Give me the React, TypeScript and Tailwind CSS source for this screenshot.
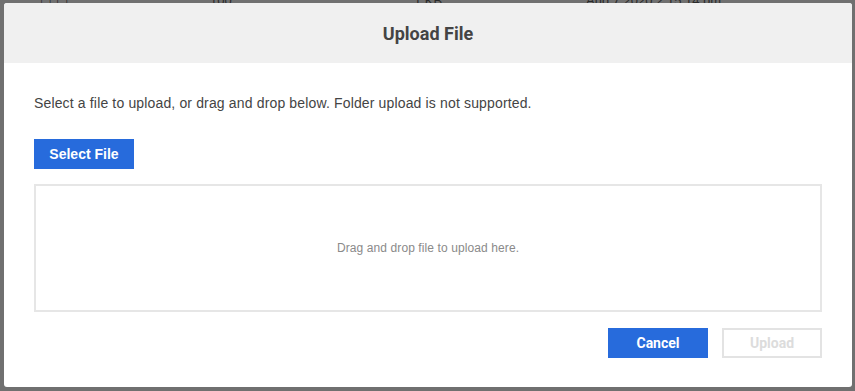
export default function App() {
  return (
    <div className="relative h-[391px] w-[855px] overflow-hidden bg-[#707070] font-['Liberation_Sans',sans-serif]">
      {/* table row behind the overlay */}
      <div className="-mt-[9px] flex h-[20px] items-center text-[13px] text-[#2a2a2a]">
        <span className="ml-[40px] w-[170px]">☐ ▭</span>
        <span className="w-[204px]">100</span>
        <span className="w-[172px]">1 KB</span>
        <span>Aug 7 2020 2:15:14 pm</span>
      </div>

      {/* modal */}
      <div className="absolute left-[4px] top-[3px] flex h-[384px] w-[848px] flex-col overflow-hidden rounded-[3px] bg-white">
        <div className="flex h-[60px] shrink-0 items-center justify-center bg-[#f0f0f0]">
          <h1 className="font-['Roboto',sans-serif] text-[18px] font-bold text-[#444]">Upload File</h1>
        </div>

        <div className="flex flex-1 flex-col px-[30px]">
          <p className="mt-[32px] text-[14px] leading-[16px] tracking-[0.15px] text-[#444]">
            Select a file to upload, or drag and drop below. Folder upload is not supported.
          </p>

          <button className="mt-[28px] h-[30px] w-[100px] bg-[#276bdc] text-[14px] font-bold text-white">
            Select File
          </button>

          <div className="mt-[15px] flex h-[128px] items-center justify-center border-2 border-[#e6e6e6]">
            <span className="text-[12px] tracking-[0.1px] text-[#8a8a8a]">Drag and drop file to upload here.</span>
          </div>

          <div className="mt-[16px] flex justify-end gap-[14px]">
            <button className="h-[30px] w-[100px] bg-[#276bdc] font-['Roboto',sans-serif] text-[14px] font-bold text-white">
              Cancel
            </button>
            <button className="h-[30px] w-[100px] border-2 border-[#e3e3e3] bg-white font-['Roboto',sans-serif] text-[14px] font-bold text-[#dcdcdc]">
              Upload
            </button>
          </div>
        </div>
      </div>
    </div>
  );
}
